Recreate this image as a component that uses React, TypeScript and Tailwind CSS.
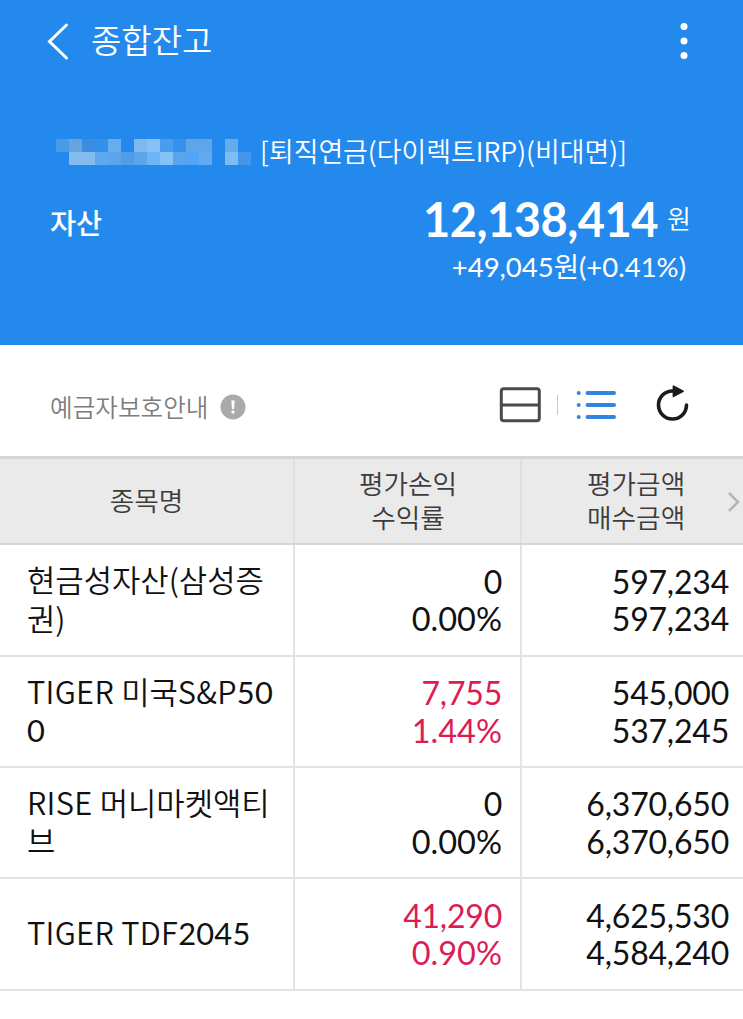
import { clsx } from "clsx";

const holdings = [
  {
    name: ["현금성자산(삼성증", "권)"],
    profit: "0",
    rate: "0.00%",
    value: "597,234",
    cost: "597,234",
    height: "h-[112px]",
  },
  {
    name: ["TIGER 미국S&P50", "0"],
    profit: "7,755",
    rate: "1.44%",
    value: "545,000",
    cost: "537,245",
    up: true,
    height: "h-[111px]",
  },
  {
    name: ["RISE 머니마켓액티", "브"],
    profit: "0",
    rate: "0.00%",
    value: "6,370,650",
    cost: "6,370,650",
    height: "h-[111px]",
  },
  {
    name: ["TIGER TDF2045"],
    profit: "41,290",
    rate: "0.90%",
    value: "4,625,530",
    cost: "4,584,240",
    up: true,
    height: "h-[112px]",
  },
];

// masked account number, one class per 13px block
const mask = [
  "bg-[#4a9ae6]", "bg-[#66a3df]", "bg-[#3a8de0]", "bg-[#3590ec]", "bg-[#66adf0]",
  "bg-[#2489ec]", "bg-[#7fb8ef]", "bg-[#86c1f8]", "bg-[#4a9cee]", "bg-[#3590ee]",
  "bg-[#5fa6e8]", "bg-[#5fa6e8]", "bg-[#2489ec]", "bg-[#66abee]", "bg-[#2489ec]",
  "bg-[#2489ec]", "bg-[#85bbee]", "bg-[#85bbee]", "bg-[#5ea8ee]", "bg-[#5aa5ec]",
  "bg-[#4f9de8]", "bg-[#5ba5e9]", "bg-[#6db6f5]", "bg-[#85c3f7]", "bg-[#58a5ee]",
  "bg-[#50a5f5]", "bg-[#5faaf0]", "bg-[#2489ec]", "bg-[#7fbcf3]", "bg-[#4496ec]",
];

// digits are set in Lato, latin letters get a little tracking
function Name({ text }: { text: string }) {
  return (
    <>
      {text.split(/(\d+|[A-Z& ]+)/).map((part, i) => {
        if (/\d/.test(part)) {
          return (
            <span key={i} className="font-['Lato',sans-serif] font-normal leading-none tracking-[0.200px]">
              {part}
            </span>
          );
        }
        if (/[A-Z]/.test(part)) {
          return (
            <span key={i} className="tracking-[0.300px]">
              {part}
            </span>
          );
        }
        return part;
      })}
    </>
  );
}

function Header() {
  return (
    <header className="h-[345px] bg-[#2489ec] text-white">
      <div className="flex h-[82px] items-center pl-[46px] pr-[54px]">
        <svg width="24" height="40" viewBox="0 0 24 40" fill="none" stroke="currentColor" strokeWidth="3" strokeLinecap="round">
          <path d="M20.500 4L3.500 20.500L20.500 37" />
        </svg>
        <h1 className="mb-[5px] ml-[21px] text-[33px] leading-[40px]">종합잔고</h1>
        <svg className="ml-auto" width="10" height="40" viewBox="0 0 10 40" fill="currentColor">
          <circle cx="5" cy="5.500" r="3.500" />
          <circle cx="5" cy="20" r="3.500" />
          <circle cx="5" cy="34.500" r="3.500" />
        </svg>
      </div>

      <div className="mt-[50px] flex h-[40px] items-center pl-[56px]">
        <div className="grid grid-cols-[repeat(15,13px)]">
          {mask.map((color, i) => (
            <span key={i} className={clsx("h-[13px]", color)} />
          ))}
        </div>
        <p className="mb-[3px] ml-[9px] whitespace-nowrap text-[26.900px] leading-[40px]">
          [퇴직연금(다이렉트IRP)(비대면)]
        </p>
      </div>

      <div className="mt-[14px] flex items-center justify-between pl-[50px] pr-[52px]">
        <p className="mt-[6px] text-[28.400px] font-medium leading-[60px]">자산</p>
        <p className="flex items-center">
          <span className="font-['Lato',sans-serif] text-[47px] font-bold leading-[60px] tracking-[-0.5px]">
            12,138,414
          </span>
          <span className="mb-[3px] ml-[9px] text-[26px] leading-[60px]">원</span>
        </p>
      </div>
      <p className="-mt-[3px] pr-[57px] text-right font-['Lato','Noto_Sans_CJK_KR',sans-serif] text-[27.500px] font-normal leading-[36px]">
        +49,045원(+0.41%)
      </p>
    </header>
  );
}

function Toolbar() {
  return (
    <div className="flex h-[111px] items-center pl-[50px] pr-[53px] pt-[8px]">
      <span className="mt-[3px] text-[24.600px] leading-[36px] text-[#7d7d7d]">예금자보호안내</span>
      <svg className="ml-[12px] mt-[4px]" width="26" height="26" viewBox="0 0 26 26">
        <circle cx="13" cy="13" r="12.500" fill="#aaa" />
        <path d="M11.300 6.500h3.400l-.7 8.500h-2z" fill="#fff" />
        <circle cx="13" cy="18" r="1.700" fill="#fff" />
      </svg>
      <svg className="ml-auto" width="42" height="36" viewBox="0 0 42 36" fill="none" stroke="#4b4b4b" strokeWidth="3">
        <rect x="2.300" y="1.800" width="38" height="32" rx="2.500" />
        <path d="M2 18h38" />
      </svg>
      <span className="ml-[16px] h-[20px] w-[1.500px] bg-[#c9c9c9]" />
      <svg className="ml-[18px]" width="40" height="32" viewBox="0 0 40 32" fill="#3185e0" stroke="#3185e0" strokeWidth="4" strokeLinecap="round">
        <path d="M11.500 4h26.500M11.500 16h26.500M11.500 28h26.500" />
        <g stroke="none">
          <circle cx="2.700" cy="4" r="2" />
          <circle cx="2.700" cy="16" r="2" />
          <circle cx="2.700" cy="28" r="2" />
        </g>
      </svg>
      <svg className="mb-[2px] ml-[40px]" width="34" height="38" viewBox="0 0 34 38" fill="none" stroke="#1c1c1c" strokeWidth="3.600" strokeLinecap="round">
        <path d="M30.500 20A14 14 0 1 1 16.500 6H18" />
        <path d="M17.500 1.300V11.300L27 6.300Z" fill="#1c1c1c" strokeWidth="1.800" strokeLinejoin="round" />
      </svg>
    </div>
  );
}

export default function App() {
  return (
    <main className="h-[1019px] w-[743px] overflow-hidden bg-white font-['Noto_Sans_CJK_KR',sans-serif] font-[350]">
      <Header />
      <Toolbar />

      <div className="grid h-[89px] grid-cols-[295px_227px_221px] border-y-2 border-t-[3px] border-[#d6d6d6] bg-[#eaeaea] text-center text-[26.700px] leading-[34px] text-[#3c3c3c]">
        <div className="flex items-center justify-center border-r-2 border-[#e0e0e0] pb-[3px]">종목명</div>
        <div className="flex flex-col justify-center border-r-2 border-[#e0e0e0] pb-[3px] pl-px">
          <span>평가손익</span>
          <span>수익률</span>
        </div>
        <div className="flex items-center pl-[65px]">
          <div className="flex flex-col pb-[3px]">
            <span>평가금액</span>
            <span>매수금액</span>
          </div>
          <svg className="ml-[42px] mt-px shrink-0" width="14" height="22" viewBox="0 0 14 22" fill="none" stroke="#b5b5b5" strokeWidth="2.500">
            <path d="M2 2L11 11L2 20" />
          </svg>
        </div>
      </div>

      {holdings.map((item) => (
        <div
          key={item.name[0]}
          className={clsx(
            "grid grid-cols-[295px_227px_221px] border-b-2 border-[#e3e3e3] text-[#111]",
            item.height
          )}
        >
          <div className="flex flex-col justify-center whitespace-nowrap border-r-2 border-[#e3e3e3] pb-[3px] pl-[27px] text-[30.800px] leading-[38.500px]">
            {item.name.map((line) => (
              <p key={line}>
                <Name text={line} />
              </p>
            ))}
          </div>
          <div
            className={clsx(
              "flex flex-col justify-center border-r-2 border-[#e3e3e3] pr-[18px] text-right font-['Lato',sans-serif] text-[32px] font-normal leading-[37.500px] tracking-[-0.200px]",
              item.up && "text-[#dc1c55]"
            )}
          >
            <span>{item.profit}</span>
            <span className="text-[32.500px] tracking-normal">{item.rate}</span>
          </div>
          <div className="flex flex-col justify-center pr-[14px] text-right font-['Lato',sans-serif] text-[32px] font-normal leading-[37.500px] tracking-[-0.200px]">
            <span>{item.value}</span>
            <span>{item.cost}</span>
          </div>
        </div>
      ))}
    </main>
  );
}
